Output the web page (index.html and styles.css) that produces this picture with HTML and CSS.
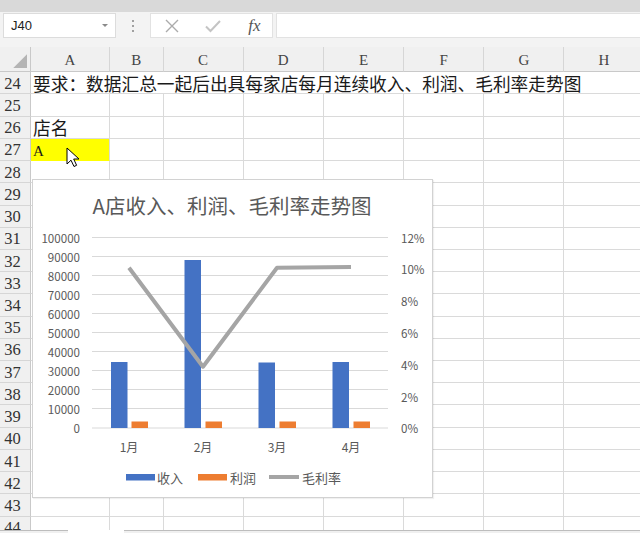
FILE: index.html
```html
<!DOCTYPE html>
<html lang="zh-CN">
<head>
    <meta charset="UTF-8">
    <meta name="viewport" content="width=device-width, initial-scale=1.0">
    <title>走势图</title>
    <link rel="stylesheet" href="styles.css">
</head>
<body>
    <div class="app">
        <div class="topbar"></div>

        <div class="formula-bar">
            <div class="name-box">
                <span>J40</span>
                <span class="caret"></span>
            </div>
            <div class="grip"><i></i><i></i><i></i></div>
            <div class="fx-buttons">
                <svg class="btn-icon" width="14" height="14" viewBox="0 0 14 14">
                    <path d="M1 1 L13 13 M13 1 L1 13" stroke="#ababab" stroke-width="1.4" fill="none"/>
                </svg>
                <svg class="btn-icon" width="16" height="14" viewBox="0 0 16 14">
                    <path d="M1 7.5 L5.5 12 L15 2" stroke="#c4c4c4" stroke-width="2" fill="none"/>
                </svg>
                <span class="btn-fx">fx</span>
            </div>
            <div class="formula-input"></div>
        </div>

        <div class="sheet">
            <div class="grid" id="grid"></div>

            <div class="chart">
                <svg class="chart-svg" viewBox="1 1 399 317" width="399" height="317">
                    <text class="chart-title" x="200" y="26">A店收入、利润、毛利率走势图</text>

                    <g class="gridlines">
                        <line x1="60" x2="356" y1="58.5" y2="58.5"/>
                        <line x1="60" x2="356" y1="77.5" y2="77.5"/>
                        <line x1="60" x2="356" y1="96.5" y2="96.5"/>
                        <line x1="60" x2="356" y1="115.5" y2="115.5"/>
                        <line x1="60" x2="356" y1="134.5" y2="134.5"/>
                        <line x1="60" x2="356" y1="153.5" y2="153.5"/>
                        <line x1="60" x2="356" y1="172.5" y2="172.5"/>
                        <line x1="60" x2="356" y1="191.5" y2="191.5"/>
                        <line x1="60" x2="356" y1="210.5" y2="210.5"/>
                        <line x1="60" x2="356" y1="229.5" y2="229.5"/>
                        <line x1="60" x2="356" y1="249" y2="249"/>
                    </g>

                    <g class="axis-left">
                        <text x="48" y="58.5">100000</text>
                        <text x="48" y="77.5">90000</text>
                        <text x="48" y="96.5">80000</text>
                        <text x="48" y="115.5">70000</text>
                        <text x="48" y="134.5">60000</text>
                        <text x="48" y="153.5">50000</text>
                        <text x="48" y="172.5">40000</text>
                        <text x="48" y="191.5">30000</text>
                        <text x="48" y="210.5">20000</text>
                        <text x="48" y="229.5">10000</text>
                        <text x="48" y="249">0</text>
                    </g>

                    <g class="axis-right">
                        <text x="369" y="58.5">12%</text>
                        <text x="369" y="90.3">10%</text>
                        <text x="369" y="122.2">8%</text>
                        <text x="369" y="154">6%</text>
                        <text x="369" y="185.8">4%</text>
                        <text x="369" y="217.7">2%</text>
                        <text x="369" y="249">0%</text>
                    </g>

                    <!-- 收入 -->
                    <g class="bar-blue">
                        <rect x="79" y="183" width="16.5" height="66"/>
                        <rect x="152.5" y="81" width="16.5" height="168"/>
                        <rect x="226.5" y="183.5" width="16.5" height="65.5"/>
                        <rect x="300.5" y="183" width="16.5" height="66"/>
                    </g>
                    <!-- 利润 -->
                    <g class="bar-orange">
                        <rect x="99.5" y="242.5" width="16.5" height="6.5"/>
                        <rect x="173.5" y="242.5" width="16.5" height="6.5"/>
                        <rect x="247.5" y="242.5" width="16.5" height="6.5"/>
                        <rect x="321.5" y="242.5" width="16.5" height="6.5"/>
                    </g>
                    <!-- 毛利率 -->
                    <polyline class="rate-line" points="97,88.7 171,187.7 245,88.7 319,88"/>

                    <g class="axis-bottom">
                        <text x="97" y="267">1月</text>
                        <text x="171" y="267">2月</text>
                        <text x="245" y="267">3月</text>
                        <text x="319" y="267">4月</text>
                    </g>

                    <g class="legend">
                        <rect x="94" y="295" width="29" height="6.5" fill="#4472c4"/>
                        <text x="125" y="298">收入</text>
                        <rect x="166" y="295" width="29" height="6.5" fill="#ed7d31"/>
                        <text x="198" y="298">利润</text>
                        <line x1="237" x2="267" y1="298" y2="298" stroke="#a5a5a5" stroke-width="4"/>
                        <text x="270" y="298">毛利率</text>
                    </g>
                </svg>
            </div>

            <svg class="cursor" width="14" height="21" viewBox="0 0 14 21">
                <path d="M1 1 L1 17 L5 13.2 L8 19.5 L10.6 18.3 L7.7 12 L13 12 Z" fill="#fff" stroke="#000" stroke-width="1"/>
            </svg>
        </div>

        <div class="tabs">
            <div class="tab-rail"></div>
            <div class="tab-active"></div>
            <div class="tab-rail tab-rail-wide"></div>
        </div>
    </div>

    <script>
        let grid = document.getElementById("grid")
        let letras = ["A", "B", "C", "D", "E", "F", "G", "H"]
        let textos = { 26: "店名", 27: "A" }

        let addCell = (clase, texto) => {
            let celda = document.createElement("div")
            celda.className = clase
            if (texto) celda.textContent = texto
            grid.appendChild(celda)
        }

        addCell("corner")
        letras.forEach(l => addCell("col-head", l))

        for (let fila = 24; fila <= 44; fila++) {
            addCell("row-head", String(fila))
            if (fila === 24) {
                addCell("cell cell-wide", "要求：数据汇总一起后出具每家店每月连续收入、利润、毛利率走势图")
                continue
            }
            letras.forEach((l, i) => {
                let clase = "cell"
                if (i === 0 && fila === 27) clase += " cell-yellow cell-serif"
                addCell(clase, i === 0 ? textos[fila] : "")
            })
        }
    </script>
</body>
</html>
```

FILE: styles.css
```css
* {
    box-sizing: border-box;
}

html, body {
    margin: 0;
    padding: 0;
    overflow: hidden;
    background: #fff;
}

.app {
    width: 640px;
    height: 533px;
    display: flex;
    flex-direction: column;
    font-family: "Noto Sans CJK SC", "Noto Sans", sans-serif;
}

.topbar {
    height: 12px;
    background: #d9d9d9;
    flex: none;
}

/* barra de formulas */
.formula-bar {
    height: 35px;
    flex: none;
    display: flex;
    align-items: flex-start;
    padding-top: 1px;
    background: #f3f3f3;
}

.name-box {
    margin-left: 3px;
    width: 113px;
    height: 25px;
    background: #fff;
    border: 1px solid #dcdcdc;
    display: flex;
    align-items: center;
    justify-content: space-between;
    padding: 0 7px 0 7px;
    font-family: "Liberation Sans", Arial, sans-serif;
    font-size: 13px;
    color: #222;
}

.caret {
    width: 0;
    height: 0;
    border-left: 3px solid transparent;
    border-right: 3px solid transparent;
    border-top: 3px solid #8a8a8a;
}

.grip {
    width: 34px;
    height: 25px;
    display: flex;
    flex-direction: column;
    align-items: center;
    justify-content: center;
    gap: 3px;
}

.grip i {
    width: 2px;
    height: 2px;
    background: #a0a0a0;
}

.fx-buttons {
    width: 123px;
    height: 25px;
    background: #fff;
    border: 1px solid #e2e2e2;
    display: grid;
    grid-template-columns: 41px 41px 41px;
    align-items: center;
    justify-items: center;
}

.btn-fx {
    font-family: "Liberation Serif", "Times New Roman", serif;
    font-style: italic;
    font-size: 17px;
    color: #555;
    line-height: 1;
    padding-left: 2px;
}

.formula-input {
    margin-left: 3px;
    flex: 1;
    height: 25px;
    background: #fff;
    border: 1px solid #e2e2e2;
    border-right: none;
}

/* hoja */
.sheet {
    position: relative;
    height: 483px;
    flex: none;
    overflow: hidden;
}

.grid {
    display: grid;
    grid-template-columns: 31px 79px 53.5px 80.2px 80.2px 80.2px 80.2px 80.2px 80.2px;
    grid-template-rows: 25.2px;
    grid-auto-rows: 22.23px;
}

.corner {
    position: relative;
    background: #f0f0f0;
    border-right: 1px solid #c9c9c9;
    border-bottom: 1px solid #c9c9c9;
}

.corner::after {
    content: "";
    position: absolute;
    right: 3px;
    bottom: 3px;
    width: 14px;
    height: 14px;
    background: #b4b4b4;
    clip-path: polygon(100% 0, 100% 100%, 0 100%);
}

.col-head {
    background: #f0f0f0;
    border-right: 1px solid #d6d6d6;
    border-bottom: 1px solid #c9c9c9;
    display: flex;
    align-items: center;
    justify-content: center;
    padding-top: 3px;
    font-family: "Liberation Serif", "Times New Roman", serif;
    font-size: 15px;
    color: #444;
}

.row-head {
    background: #f0f0f0;
    border-right: 1px solid #c9c9c9;
    border-bottom: 1px solid #d6d6d6;
    display: flex;
    align-items: center;
    justify-content: center;
    padding: 2px 5px 0 0;
    font-family: "Liberation Serif", "Times New Roman", serif;
    font-size: 16.5px;
    color: #333;
}

.cell {
    border-right: 1px solid #dadada;
    border-bottom: 1px solid #dadada;
    display: flex;
    align-items: center;
    padding-left: 2px;
    font-size: 17.7px;
    line-height: 22px;
    color: #1a1a1a;
    white-space: nowrap;
}

.cell-wide {
    grid-column: span 8;
}

.cell-yellow {
    background: #ffff00;
    border-bottom-color: #ffff00;
}

.cell-serif {
    font-family: "Liberation Serif", "Times New Roman", serif;
    font-size: 15px;
    padding-top: 3px;
}

/* grafico */
.chart {
    position: absolute;
    left: 32px;
    top: 132px;
    width: 401px;
    height: 319px;
    background: #fff;
    border: 1px solid #d2d2d2;
    box-shadow: 1px 1px 1px rgba(0, 0, 0, 0.06);
}

.chart-svg {
    display: block;
}

.chart-svg text {
    font-family: "Noto Sans CJK SC", "Noto Sans", sans-serif;
    fill: #595959;
    dominant-baseline: central;
}

.chart-title {
    font-size: 20.5px;
    text-anchor: middle;
}

.gridlines line {
    stroke: #d9d9d9;
    stroke-width: 1;
}

.axis-left text {
    font-size: 11.6px;
    text-anchor: end;
}

.axis-right text {
    font-size: 11.6px;
    text-anchor: start;
}

.axis-bottom text {
    font-size: 12px;
    text-anchor: middle;
}

.legend text {
    font-size: 13px;
}

.bar-blue rect {
    fill: #4472c4;
}

.bar-orange rect {
    fill: #ed7d31;
}

.rate-line {
    fill: none;
    stroke: #a5a5a5;
    stroke-width: 4;
    stroke-linejoin: round;
}

.cursor {
    position: absolute;
    left: 66px;
    top: 100px;
}

/* pestañas */
.tabs {
    height: 3px;
    flex: none;
    display: flex;
    background: #f0f0f0;
}

.tab-rail {
    width: 68px;
    border-top: 1px solid #bdbdbd;
}

.tab-active {
    width: 56px;
    background: #fff;
}

.tab-rail-wide {
    flex: 1;
}
```
